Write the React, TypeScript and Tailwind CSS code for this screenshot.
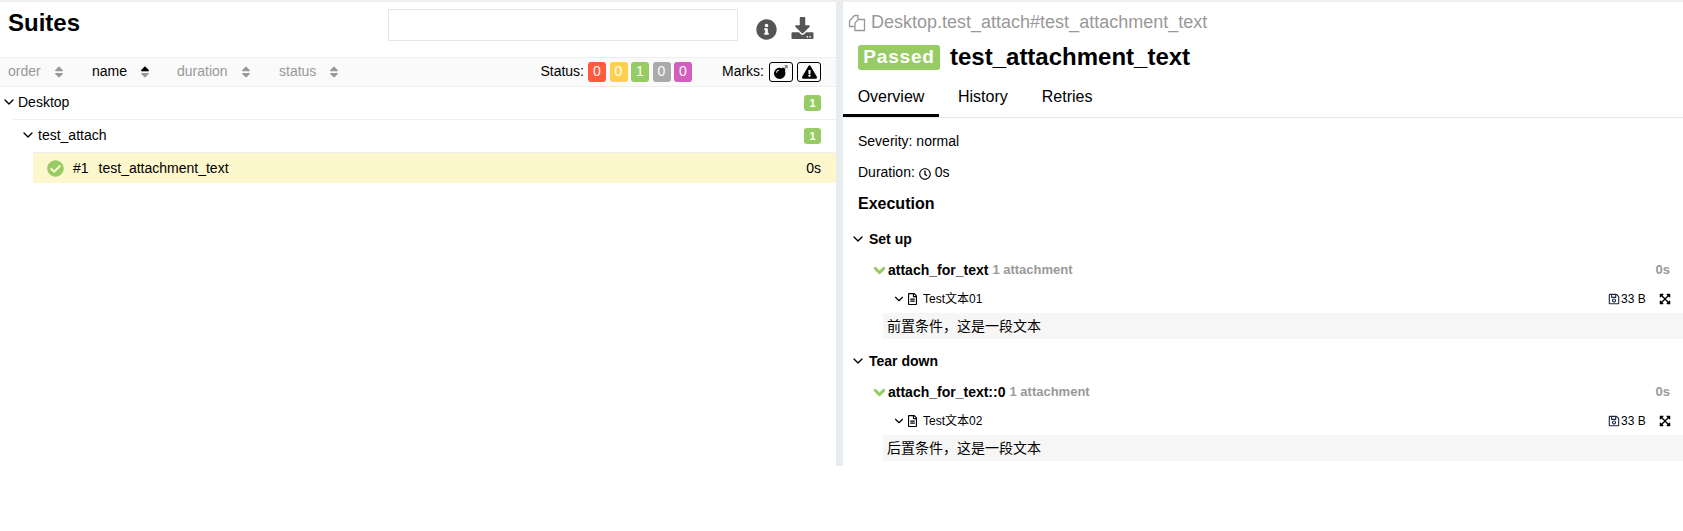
import React from "react";
import {
  FaInfoCircle,
  FaDownload,
  FaBomb,
  FaExclamationTriangle,
  FaRegClock,
  FaRegFileAlt,
  FaRegSave,
  FaExpandArrowsAlt,
  FaCheckCircle,
  FaSort,
  FaSortUp,
} from "react-icons/fa";
import { ChevronDown } from "lucide-react";

const font = { fontFamily: '"Liberation Sans", "Noto Sans CJK SC", Arial, sans-serif' };

function SortItem({ label, active, className }: { label: string; active?: boolean; className: string }) {
  return (
    <div className={`flex items-center ${active ? "text-black" : "text-[#999]"} ${className}`}>
      <span>{label}</span>
      <span className="relative ml-[13px] inline-block h-[14px] w-[10px] text-[#999]">
        <FaSort className="absolute left-0 top-0 h-[14px] w-[10px]" />
        {active && <FaSortUp className="absolute left-0 top-0 h-[14px] w-[10px] text-black" />}
      </span>
    </div>
  );
}

function StatusBox({ n, color }: { n: number; color: string }) {
  return (
    <span className={`flex h-[20px] w-[18px] items-center justify-center rounded-[3px] text-[14px] text-white ${color}`}>{n}</span>
  );
}

function Count() {
  return (
    <span className="flex h-[16px] w-[17px] items-center justify-center rounded-[3px] bg-[#97cc64] text-[11px] font-bold text-white">1</span>
  );
}

function CopyIcon() {
  return (
    <svg viewBox="0 0 18 18" className="mr-[5px] ml-[1px] h-[18px] w-[18px]" fill="none" stroke="#999" strokeWidth="1.3">
      <path d="M6.5 1.5h3.5v4M6.5 1.5L1.5 7v5.5h5" />
      <path d="M10.5 5.5h6v11h-9.5v-7.5z" fill="white" />
    </svg>
  );
}

function Fixture({ name, filename, body }: { name: string; filename: string; body: string }) {
  return (
    <div>
      <div className="flex h-[31px] items-center pl-[28px] pr-[13px] pt-[1px] text-[14px]">
        <ChevronDown className="h-[17px] w-[17px] text-[#97cc64]" strokeWidth={4} />
        <span className="font-bold text-black">{name}</span>
        <span className="ml-[4px] text-[13px] font-bold text-[#999]">1 attachment</span>
        <span className="ml-auto text-[13px] font-bold text-[#999]">0s</span>
      </div>
      <div className="flex h-[28px] items-center pl-[49px] pr-[12px] text-[12px] text-black">
        <ChevronDown className="h-[14px] w-[14px]" strokeWidth={2} />
        <FaRegFileAlt className="ml-[1px] h-[12px] w-[11px]" />
        <span className="ml-[5px]">{filename}</span>
        <FaRegSave className="ml-auto h-[12px] w-[12px] text-[#1f2a44]" />
        <span className="ml-[1px] w-[25px] text-[12px]">33 B</span>
        <FaExpandArrowsAlt className="ml-[13px] h-[12px] w-[12px]" />
      </div>
      <div className="ml-[40px] flex h-[26px] items-center bg-[#f6f6f6] px-[4px] text-[14px] text-black">{body}</div>
    </div>
  );
}

function SectionTitle({ children }: { children: React.ReactNode }) {
  return (
    <div className="flex h-[30px] items-center pl-[7px] text-[14px] font-bold text-black">
      <ChevronDown className="mr-[3px] h-[16px] w-[16px]" strokeWidth={2} />
      {children}
    </div>
  );
}

export default function App() {
  return (
    <div className="h-[531px] w-[1683px] overflow-hidden bg-white text-black" style={font}>
      <div className="h-[2px] bg-[#eeeeee]" />
      <div className="flex h-[464px]">
        <div className="w-[836px] shrink-0">
          <div className="flex h-[55px] items-start">
            <h1 className="ml-[8px] mt-[5px] text-[24px] font-bold leading-[32px]">Suites</h1>
            <div className="ml-[308px] mt-[7px] h-[32px] w-[350px] border border-[#e6e6e6]" />
            <FaInfoCircle className="ml-[18px] mt-[17px] h-[21px] w-[21px] text-[#555]" />
            <FaDownload className="ml-[14px] mt-[15px] h-[22px] w-[23px] text-[#555]" />
          </div>
          <div className="flex h-[30px] items-center border-y border-[#eeeeee] bg-[#fafafa] pb-[1px] text-[14px]">
            <SortItem label="order" className="ml-[8px] w-[84px]" />
            <SortItem label="name" active className="w-[85px]" />
            <SortItem label="duration" className="w-[102px]" />
            <SortItem label="status" />
            <div className="ml-auto flex items-center">
              <span className="mr-[4px]">Status:</span>
              <div className="flex gap-[3.5px]">
                <StatusBox n={0} color="bg-[#fd5a3e]" />
                <StatusBox n={0} color="bg-[#ffd050]" />
                <StatusBox n={1} color="bg-[#97cc64]" />
                <StatusBox n={0} color="bg-[#aaaaaa]" />
                <StatusBox n={0} color="bg-[#d35ebe]" />
              </div>
              <span className="ml-[30px] mr-[5px]">Marks:</span>
              <span className="flex h-[20px] w-[24px] items-center justify-center rounded-[3px] border border-black">
                <FaBomb className="h-[14px] w-[14px]" />
              </span>
              <span className="ml-[4px] mr-[15px] flex h-[20px] w-[24px] items-center justify-center rounded-[3px] border border-black">
                <FaExclamationTriangle className="h-[14px] w-[15px]" />
              </span>
            </div>
          </div>
          <div className="flex h-[32px] items-center pb-[2px] text-[14px]">
            <ChevronDown className="ml-[1px] h-[16px] w-[16px]" strokeWidth={2} />
            <span className="ml-[1px]">Desktop</span>
            <span className="ml-auto mr-[15px] mt-[2px]"><Count /></span>
          </div>
          <div className="ml-[13px] flex h-[33px] items-center border-t border-[#eeeeee] pb-[2px] text-[14px]">
            <ChevronDown className="ml-[7px] h-[16px] w-[16px]" strokeWidth={2} />
            <span className="ml-[2px]">test_attach</span>
            <span className="ml-auto mr-[15px] mt-[2px]"><Count /></span>
          </div>
          <div className="ml-[33px] flex h-[31px] items-center border-t border-[#eeeeee] bg-[#fdf7cd] text-[14px]">
            <FaCheckCircle className="ml-[14px] h-[17px] w-[17px] text-[#97cc64]" />
            <span className="ml-[9px]">#1</span>
            <span className="ml-[10px]">test_attachment_text</span>
            <span className="ml-auto mr-[15px]">0s</span>
          </div>
        </div>
        <div className="w-[7px] shrink-0 bg-[#e9ecef]" />
        <div className="min-w-0 flex-1">
          <div className="flex h-[38px] items-center pl-[4px] pt-[3px] text-[18px] text-[#999]">
            <CopyIcon />
            Desktop.test_attach#test_attachment_text
          </div>
          <div className="flex h-[34px] items-center pl-[15px]">
            <span className="flex h-[25px] w-[82px] items-center justify-center rounded-[3px] bg-[#97cc64] text-[19px] font-bold tracking-[0.8px] text-white">Passed</span>
            <span className="ml-[10px] text-[24px] font-bold leading-none">test_attachment_text</span>
          </div>
          <div className="flex h-[44px] items-end border-b border-[#e6e6e6] text-[16px]">
            <div className="flex h-[36px] w-[96px] items-center justify-center border-b-[3px] border-black pb-[1px]">Overview</div>
            <div className="ml-[19px] flex h-[36px] items-center pb-[4px]">History</div>
            <div className="ml-[34px] flex h-[36px] items-center pb-[4px]">Retries</div>
          </div>
          <div className="flex h-[34px] items-end pl-[15px] text-[14px]">Severity: normal</div>
          <div className="flex h-[31px] items-end pl-[15px] text-[14px]">
            Duration:
            <FaRegClock className="mx-[4px] mb-[3px] h-[12px] w-[12px]" />
            0s
          </div>
          <div className="flex h-[33px] items-end pl-[15px] text-[16px] font-bold">Execution</div>
          <div className="pt-[8px]">
            <SectionTitle>Set up</SectionTitle>
            <Fixture name="attach_for_text" filename="Test文本01" body="前置条件，这是一段文本" />
            <div className="h-[7px]" />
            <SectionTitle>Tear down</SectionTitle>
            <Fixture name="attach_for_text::0" filename="Test文本02" body="后置条件，这是一段文本" />
          </div>
        </div>
      </div>
    </div>
  );
}
